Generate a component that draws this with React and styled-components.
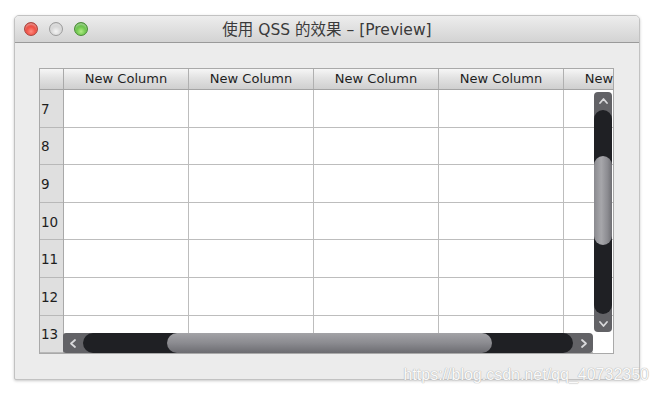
import React from 'react';
import styled, { createGlobalStyle } from 'styled-components';

const Global = createGlobalStyle`
  html, body { margin: 0; padding: 0; background: #fff; }
  body { font-family: "DejaVu Sans", "Noto Sans CJK SC", sans-serif; }
`;

const Page = styled.div`
  position: relative;
  width: 657px;
  height: 396px;
  padding: 15px 0 0 14px;
  box-sizing: border-box;
  overflow: hidden;
`;

const Window = styled.div`
  width: 626px;
  height: 365px;
  box-sizing: border-box;
  border: 1px solid #c2c2c2;
  border-radius: 5px 5px 2px 2px;
  background: #ececec;
  box-shadow: 0 1px 3px rgba(0, 0, 0, 0.22);
  display: flex;
  flex-direction: column;
  overflow: hidden;
`;

const TitleBar = styled.div`
  height: 26px;
  flex: none;
  display: grid;
  grid-template-columns: 1fr auto 1fr;
  align-items: center;
  background: linear-gradient(#ededed, #d3d3d3);
  border-bottom: 1px solid #9a9a9a;
`;

const Lights = styled.div`
  display: flex;
  gap: 11px;
  padding-left: 9px;
`;

const Light = styled.span`
  width: 14px;
  height: 14px;
  border-radius: 50%;
  box-sizing: border-box;
  border: 1px solid ${p => p.$edge};
  background: radial-gradient(circle at 50% 70%, ${p => p.$light} 0%, ${p => p.$mid} 55%, ${p => p.$dark} 100%);
  box-shadow: inset 0 2px 2px rgba(255,255,255,0.45);
`;

const Title = styled.div`
  font-size: 15.5px;
  color: #3a3a3a;
  white-space: nowrap;
  padding-bottom: 2px;
`;

const Content = styled.div`
  flex: 1;
  padding: 25px 0 0 24px;
`;

const Table = styled.div`
  display: grid;
  grid-template-columns: 24px 529px 20px;
  grid-template-rows: 21px 243px 20px;
  width: max-content;
  border: 1px solid #a9a9a9;
  background: #fff;
  font-size: 13px;
  color: #1e1e1e;
`;

const headerBg = `linear-gradient(#f6f6f6, #e2e2e2 45%, #cfcfcf)`;

const Corner = styled.div`
  grid-column: 1;
  grid-row: 1;
  background: ${headerBg};
  border-right: 1px solid #a9a9a9;
  border-bottom: 1px solid #a4a4a4;
`;

const HeaderStrip = styled.div`
  grid-column: 2 / 4;
  grid-row: 1;
  display: flex;
  overflow: hidden;
  background: ${headerBg};
  border-bottom: 1px solid #a4a4a4;
`;

const HeaderCell = styled.div`
  flex: none;
  width: 125px;
  box-sizing: border-box;
  border-right: 1px solid #b0b0b0;
  display: flex;
  align-items: center;
  justify-content: center;
  white-space: nowrap;
  padding-bottom: 1px;
  overflow: hidden;
`;

const RowHeader = styled.div`
  grid-column: 1;
  grid-row: 2 / 4;
  overflow: hidden;
  background: #dfdfdf;
  border-right: 1px solid #a9a9a9;
`;

const RowLabel = styled.div`
  height: 37.6px;
  box-sizing: border-box;
  border-bottom: 1px solid #b8b8b8;
  display: flex;
  align-items: center;
  padding: 1px 0 0 1px;
  font-size: 13.5px;
`;

const Viewport = styled.div`
  grid-column: 2 / 4;
  grid-row: 2 / 4;
  overflow: hidden;
`;

const Row = styled.div`
  display: flex;
  height: 37.6px;
  box-sizing: border-box;
  border-bottom: 1px solid #bdbdbd;
`;

const Cell = styled.div`
  flex: none;
  width: 125px;
  box-sizing: border-box;
  border-right: 1px solid #bdbdbd;
`;

const VScroll = styled.div`
  grid-column: 3;
  grid-row: 2;
  margin: 2px 1px 1px 1px;
  display: flex;
  flex-direction: column;
  background: #626266;
  border-radius: 4px;
  z-index: 1;
`;

const HScroll = styled.div`
  grid-column: 2;
  grid-row: 3;
  margin: 0 0 0 -1px;
  display: flex;
  background: #626266;
  border-radius: 3px 4px 4px 3px;
  z-index: 1;
`;

const CornerFill = styled.div`
  grid-column: 3;
  grid-row: 3;
  background: #fff;
  z-index: 1;
`;

const Arrow = styled.div`
  flex: none;
  width: ${p => (p.$horizontal ? '20px' : 'auto')};
  height: ${p => (p.$horizontal ? 'auto' : '18px')};
  display: flex;
  align-items: center;
  justify-content: center;
`;

const Groove = styled.div`
  flex: 1;
  display: flex;
  flex-direction: ${p => (p.$horizontal ? 'row' : 'column')};
  background: #1f2024;
  border-radius: 10px;
  overflow: hidden;
`;

const Handle = styled.div`
  flex: none;
  border-radius: 10px;
  ${p =>
    p.$horizontal
      ? `width: ${p.$size}px; margin-left: ${p.$offset}px;
         background: linear-gradient(#a3a3a7, #8b8b90 50%, #6c6c71);`
      : `height: ${p.$size}px; margin-top: ${p.$offset}px;
         background: linear-gradient(90deg, #8a8a8f, #a7a7ab 40%, #8c8c91 75%, #6f6f74);`}
`;

const Watermark = styled.div`
  position: absolute;
  right: 8px;
  top: 366px;
  font-family: "Liberation Sans", sans-serif;
  font-size: 16px;
  color: rgba(255, 255, 255, 0.95);
  text-shadow: 0 0 1px #b0b0b0, 0 0 1px #b0b0b0;
  white-space: nowrap;
`;

const Chevron = ({ dir }) => {
  const paths = {
    up: 'M2 7 L5.5 3 L9 7',
    down: 'M2 4 L5.5 8 L9 4',
    left: 'M7 2 L3 5.5 L7 9',
    right: 'M4 2 L8 5.5 L4 9',
  };
  return (
    <svg width="11" height="11" viewBox="0 0 11 11">
      <path d={paths[dir]} fill="none" stroke="#d9d9db" strokeWidth="1.8" strokeLinecap="round" strokeLinejoin="round" />
    </svg>
  );
};

const columns = ['New Column', 'New Column', 'New Column', 'New Column', 'New Column'];
const rows = [7, 8, 9, 10, 11, 12, 13];

export default function App() {
  return (
    <>
      <Global />
      <Page>
        <Window>
          <TitleBar>
            <Lights>
              <Light $light="#ff8b80" $mid="#ea4236" $dark="#b8241c" $edge="#a8453f" />
              <Light $light="#f4f4f4" $mid="#d2d2d2" $dark="#a9a9a9" $edge="#9c9c9c" />
              <Light $light="#b0ec85" $mid="#5fbd3f" $dark="#3a8f22" $edge="#4a8a37" />
            </Lights>
            <Title>使用 QSS 的效果 – [Preview]</Title>
            <div />
          </TitleBar>
          <Content>
            <Table>
              <Corner />
              <HeaderStrip>
                {columns.map((c, i) => (
                  <HeaderCell key={i}>{c}</HeaderCell>
                ))}
              </HeaderStrip>
              <RowHeader>
                {rows.map(r => (
                  <RowLabel key={r}>{r}</RowLabel>
                ))}
              </RowHeader>
              <Viewport>
                {rows.map(r => (
                  <Row key={r}>
                    {columns.map((c, i) => (
                      <Cell key={i} />
                    ))}
                  </Row>
                ))}
              </Viewport>
              <VScroll>
                <Arrow><Chevron dir="up" /></Arrow>
                <Groove>
                  <Handle $offset={46} $size={89} />
                </Groove>
                <Arrow><Chevron dir="down" /></Arrow>
              </VScroll>
              <HScroll>
                <Arrow $horizontal><Chevron dir="left" /></Arrow>
                <Groove $horizontal>
                  <Handle $horizontal $offset={84} $size={325} />
                </Groove>
                <Arrow $horizontal><Chevron dir="right" /></Arrow>
              </HScroll>
              <CornerFill />
            </Table>
          </Content>
        </Window>
        <Watermark>https://blog.csdn.net/qq_40732350</Watermark>
      </Page>
    </>
  );
}
